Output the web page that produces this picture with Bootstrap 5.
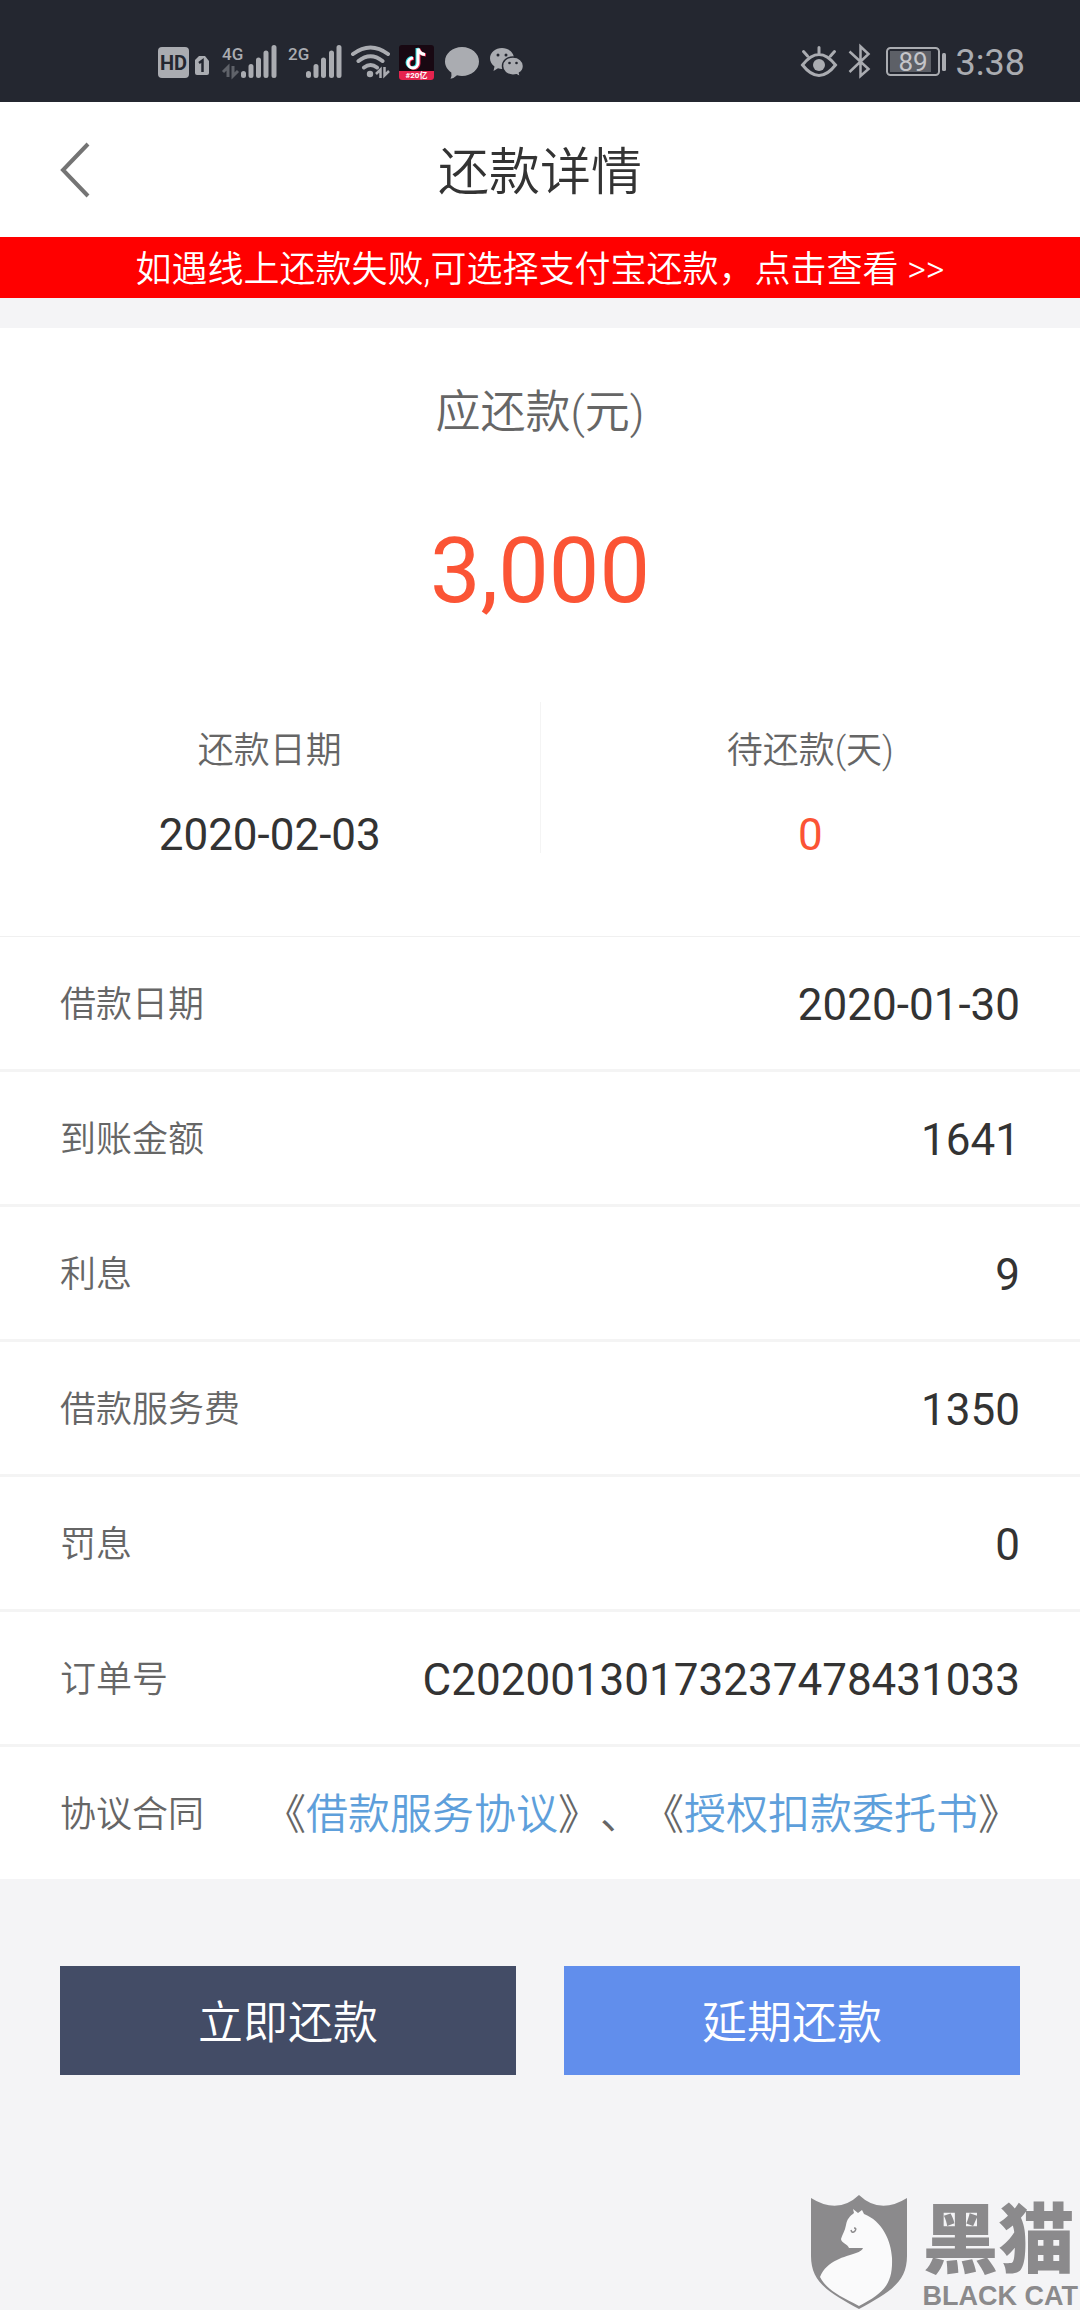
<!DOCTYPE html>
<html lang="zh-CN">
<head>
<meta charset="utf-8">
<meta name="viewport" content="width=device-width, initial-scale=1">
<title>还款详情</title>
<link href="https://cdn.jsdelivr.net/npm/bootstrap@5.3.0/dist/css/bootstrap.min.css" rel="stylesheet">
<style>
  body { background: #f4f4f6; color: #333; font-family: Roboto, "Noto Sans CJK SC", sans-serif; font-size: 45px; line-height: 60px; text-spacing-trim: space-all; }
  a { text-decoration: none; }
  .status-bar { background: #242730; color: #aaacb1; height: 102px; padding: 42px 55px 0 156px; }
  .status-bar svg { height: 40px; flex: none; }
  .clock { font-size: 36px; line-height: 42px; }
  .title-bar { height: 135px; padding: 0 60px; }
  .title-bar h1 { font-size: 51px; line-height: 60px; font-weight: 350; padding-top: 6px; }
  .side-slot { width: 60px; }
  .notice { background: #f00; color: #fff; font-size: 36px; line-height: 55px; padding-top: 6px; font-weight: 350; }
  .notice:hover { color: #fff; }
  .summary { margin-top: 30px; padding: 55px 0 83px; border-bottom: 1px solid #f0f0f0; }
  .amount { font-size: 90px; line-height: 120px; margin: 69px 0 70px; }
  .hot { color: #fb5435; }
  .hint { color: #666; font-weight: 350; }
  .summary-cell { padding-top: 24px; height: 151px; }
  .summary-cell + .summary-cell { border-left: 1px solid #f4f4f4; }
  .caption-text { font-size: 36px; line-height: 50px; color: #666; font-weight: 350; }
  .figure-text { font-size: 44px; }
  .summary-cell .figure-text { margin-top: 29px; }
  .detail-row { padding: 38px 60px 34px; border-bottom: 3px solid #f4f4f4; }
  .detail-row:last-child { border-bottom: 0; }
  .agreements { font-size: 42px; }
  .agreements a { color: #5e9fdb; }
  .actions { padding: 87px 60px; gap: 48px; }
  .actions .btn { --bs-btn-border-width: 0; --bs-btn-border-radius: 0; --bs-btn-color: #fff; --bs-btn-hover-color: #fff; --bs-btn-font-weight: 350; font-size: 45px; line-height: 61px; padding: 27px 0 21px; }
  .pay-now { --bs-btn-bg: #434c66; --bs-btn-hover-bg: #39415a; }
  .pay-later { --bs-btn-bg: #618eec; --bs-btn-hover-bg: #4f7fe0; }
  .source-logo { color: #8b8a8c; gap: 15px; padding-right: 2px; }
  .logo-name { font-family: "Noto Sans CJK SC", sans-serif; font-size: 76px; line-height: 96px; font-weight: 900; }
  .logo-latin { font-family: "Liberation Sans", sans-serif; font-size: 27px; line-height: 28px; font-weight: 700; }
</style>
<script src="https://cdn.jsdelivr.net/npm/bootstrap@5.3.0/dist/js/bootstrap.bundle.min.js"></script>
</head>
<body class="d-flex flex-column min-vh-100">

<div class="status-bar d-flex justify-content-between">
  <div class="d-flex gap-2">
    <svg width="56" viewBox="156 42 56 40" fill="#aaacb1">
      <rect x="158" y="47" width="31" height="31" rx="4"/>
      <text x="160" y="70" font-size="20" font-weight="700" fill="#242730">HD</text>
      <path d="M199 56h6l4 5v12a2 2 0 0 1-2 2h-10a2 2 0 0 1-2-2V60z"/>
      <path d="M199 63l3.500-2.500V72" fill="none" stroke="#242730" stroke-width="2.500"/>
    </svg>
    <svg width="58" viewBox="220 42 58 40" fill="#aaacb1">
      <text x="222" y="60" font-size="17" font-weight="500">4G</text>
      <path d="M223 72l5-5v10M238 71l-5 5V66" fill="none" stroke="#5f6269" stroke-width="3"/>
      <path d="M243.500 73.500v2M251 66.500v9M258.500 60v15.500M266 53v22.500M274 47.500v28" stroke="#aaacb1" stroke-width="5" stroke-linecap="round"/>
    </svg>
    <svg width="56" viewBox="286 42 56 40" fill="#aaacb1">
      <text x="288" y="60" font-size="17" font-weight="500">2G</text>
      <path d="M308.500 73.500v2M316 66.500v9M323.500 60v15.500M331.500 53v22.500M339 47.500v28" stroke="#aaacb1" stroke-width="5" stroke-linecap="round"/>
    </svg>
    <svg width="40" viewBox="350 42 40 40" fill="none" stroke="#aaacb1" stroke-width="4" stroke-linecap="round">
      <path d="M353 54q17.500-13 35 0M358.500 61q12-9.500 24 0M364 67.500q6.500-5 13 0"/>
      <circle cx="370" cy="74" r="3.200" fill="#aaacb1" stroke="none"/>
      <path d="M376 74l4.500-4.500V78M389 71l-4.500 4.500V67" stroke-width="2.500" stroke-linecap="butt"/>
    </svg>
    <svg width="38" viewBox="398 42 38 40">
      <rect x="399" y="45" width="35" height="35" rx="3" fill="#180812"/>
      <path d="M399 71h35v6a3 3 0 0 1-3 3h-29a3 3 0 0 1-3-3z" fill="#e5234e"/>
      <g fill="none" stroke-width="3">
        <path d="M417 48v14.500a5 5 0 1 1-5-5M417 48q1.500 5.500 7 6" stroke="#25d8df"/>
        <path d="M419 49v14.500a5 5 0 1 1-5-5M419 49q1.500 5.500 7 6" stroke="#ef2950"/>
        <path d="M418 48.500V63a5 5 0 1 1-5-5M418 48.500q1.500 5.500 7 6" stroke="#fff"/>
      </g>
      <text x="416.500" y="78" font-size="8" font-weight="700" fill="#fff" text-anchor="middle">#20亿</text>
    </svg>
    <svg width="36" viewBox="444 42 36 40" fill="#aaacb1">
      <path d="M462 47c9.500 0 17 6.500 17 14.500S471.500 76 462 76q-2.500 0-5-.7-3 3-6.500 3.500 1.500-3 .8-6.300C447.500 70 445 66 445 61.500 445 53.500 452.500 47 462 47z"/>
    </svg>
    <svg width="36" viewBox="488 42 36 40" fill="#aaacb1">
      <path d="M502 48c6.500 0 12 4.500 12 10.300S508.500 69 502 69q-2 0-4-.7l-4.500 2.700 1-4.500c-3-2-4.500-5-4.500-8.200C490 52.500 495.500 48 502 48z"/>
      <path d="M513 57c6 0 10.500 4 10.500 9 0 3-1.500 5.500-4 7l1 4-4-2.300q-1.500.5-3.500.5c-6 0-10.500-4-10.500-9.200s4.500-9 10.500-9z" stroke="#242730" stroke-width="1.500"/>
      <g fill="#242730"><circle cx="498" cy="55" r="1.500"/><circle cx="506" cy="55" r="1.500"/><circle cx="509.500" cy="63" r="1.300"/><circle cx="516.500" cy="63" r="1.300"/></g>
    </svg>
  </div>
  <div class="d-flex gap-2">
    <svg width="38" viewBox="800 42 38 40" fill="none" stroke="#aaacb1" stroke-width="3" stroke-linecap="round">
      <path d="M802.500 65q16.500-21 33 0-16.500 21-33 0zM819 53.500v-6M807.500 56l-4-4.500M830.500 56l4-4.500"/>
      <circle cx="819" cy="65" r="6" fill="#aaacb1" stroke="none"/>
    </svg>
    <svg width="30" viewBox="846 42 30 40" fill="none" stroke="#aaacb1" stroke-width="2.500">
      <path d="M849.500 51.500L868.500 69 860.500 76V46.500l8 7.500-19 18"/>
    </svg>
    <svg width="64" viewBox="884 42 64 40">
      <rect x="887" y="48" width="52" height="27" rx="3.500" fill="none" stroke="#aaacb1" stroke-width="2"/>
      <rect x="890" y="51" width="41" height="21" fill="#5d6067"/>
      <rect x="942" y="53" width="4" height="18" rx="1.500" fill="#aaacb1"/>
      <text x="913" y="71" font-size="26" fill="#c4c5c9" text-anchor="middle">89</text>
    </svg>
    <span class="clock">3:38</span>
  </div>
</div>

<header class="title-bar bg-white d-flex align-items-center justify-content-between">
  <a class="side-slot d-flex" href="#" aria-label="返回">
    <svg width="30" height="56" viewBox="0 0 30 56" fill="none" stroke="#747474" stroke-width="4"><path d="M28 2L3 28l25 26"/></svg>
  </a>
  <h1 class="m-0">还款详情</h1>
  <span class="side-slot"></span>
</header>

<a class="notice d-block text-center" href="#">如遇线上还款失败,可选择支付宝还款，点击查看 &gt;&gt;</a>

<main>
  <section class="summary bg-white text-center">
    <div class="hint">应还款(元)</div>
    <div class="amount hot">3,000</div>
    <div class="row g-0">
      <div class="col summary-cell">
        <div class="caption-text">还款日期</div>
        <div class="figure-text">2020-02-03</div>
      </div>
      <div class="col summary-cell">
        <div class="caption-text">待还款(天)</div>
        <div class="figure-text hot">0</div>
      </div>
    </div>
  </section>

  <section class="bg-white">
    <div class="detail-row d-flex justify-content-between align-items-center"><span class="caption-text">借款日期</span><span class="figure-text">2020-01-30</span></div>
    <div class="detail-row d-flex justify-content-between align-items-center"><span class="caption-text">到账金额</span><span class="figure-text">1641</span></div>
    <div class="detail-row d-flex justify-content-between align-items-center"><span class="caption-text">利息</span><span class="figure-text">9</span></div>
    <div class="detail-row d-flex justify-content-between align-items-center"><span class="caption-text">借款服务费</span><span class="figure-text">1350</span></div>
    <div class="detail-row d-flex justify-content-between align-items-center"><span class="caption-text">罚息</span><span class="figure-text">0</span></div>
    <div class="detail-row d-flex justify-content-between align-items-center"><span class="caption-text">订单号</span><span class="figure-text">C20200130173237478431033</span></div>
    <div class="detail-row d-flex justify-content-between align-items-center"><span class="caption-text">协议合同</span><span class="agreements hint">《<a href="#">借款服务协议</a>》、《<a href="#">授权扣款委托书</a>》</span></div>
  </section>

  <div class="actions d-flex">
    <button type="button" class="btn pay-now flex-fill w-100">立即还款</button>
    <button type="button" class="btn pay-later flex-fill w-100">延期还款</button>
  </div>
</main>

<footer class="source-logo d-flex align-items-end mt-auto ms-auto">
  <svg width="98" height="115" viewBox="0 0 98 115">
    <path d="M1 3q27 17 48-3 21 20 48 3v58c0 26-17 36-48 53C18 97 1 87 1 61z" fill="#8b8a8c"/>
    <path d="M43 14l5 4 4-3 2 4c18 7 27 26 28 44 1 26-8 35-33 48-21-11-32-16-39-29 7-17 25-20 36-24q6-2 7-5H39c-1-4-8-5-8-9 1-4 4-8 5-14 1-6 4-9 8-12z" fill="#fafafb"/>
    <path d="M41 35q1 4 4 1M44 33q3 0 1 3" fill="none" stroke="#8b8a8c" stroke-width="1.500"/>
  </svg>
  <div class="text-nowrap">
    <div class="logo-name">黑猫</div>
    <div class="logo-latin">BLACK CAT</div>
  </div>
</footer>
</body>
</html>
